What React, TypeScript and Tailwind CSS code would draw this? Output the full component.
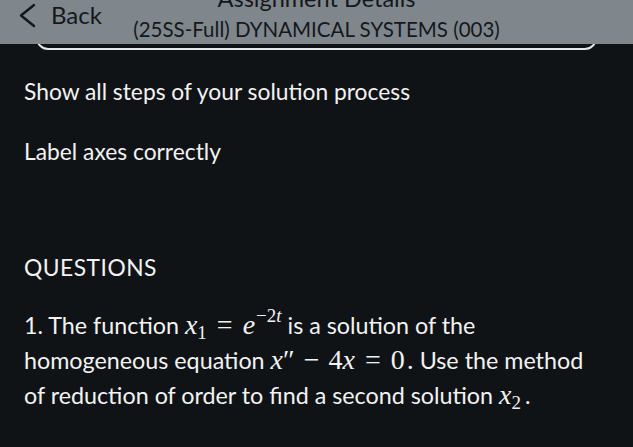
const math = { fontFamily: '"Liberation Serif", "DejaVu Serif", serif' };

function M({ children, className = "" }: { children: React.ReactNode; className?: string }) {
  return (
    <span className={`italic text-[28px] leading-[0] ${className}`} style={math}>
      {children}
    </span>
  );
}

function R({ children, className = "" }: { children: React.ReactNode; className?: string }) {
  return (
    <span className={`text-[28px] leading-[0] ${className}`} style={math}>
      {children}
    </span>
  );
}

export default function App() {
  return (
    <div
      className="w-[633px] h-[447px] overflow-hidden bg-[#101316] text-[#f2f2f2]"
      style={{ fontFamily: 'Lato, "Open Sans", sans-serif' }}
    >
      {/* 헤더 */}
      <header className="relative h-[44px] bg-[#7f878d] text-[#15181b]">
        <div className="flex items-center pl-[13px] pt-[1px]">
          <svg width="24" height="28" viewBox="0 0 24 28" fill="none">
            <path d="M21 4 L8 14.5 L21 25" stroke="#15181b" strokeWidth="2.4" strokeLinecap="round" strokeLinejoin="round" />
          </svg>
          <span className="ml-[14px] text-[24px] leading-[26px]">Back</span>
        </div>
        <div className="absolute inset-x-0 top-0 flex flex-col items-center">
          <span className="text-[23.5px] leading-[28px] -mt-[16px]">Assignment Details</span>
          <span className="text-[20.5px] leading-[22px] mt-[6px]">(25SS-Full) DYNAMICAL SYSTEMS (003)</span>
        </div>
      </header>

      {/* 카드 하단 테두리 */}
      <div className="h-[6px] overflow-hidden px-[36px]">
        <div className="h-[24px] -mt-[18px] rounded-[14px] border-2 border-[#e6e6e6]" />
      </div>

      <div className="px-[24px]">
        <p className="mt-[27px] text-[22.8px] leading-[28px]">Show all steps of your solution process</p>
        <p className="mt-[32px] text-[22.8px] leading-[28px]">Label axes correctly</p>
        <p className="mt-[88px] text-[22.8px] leading-[28px] tracking-[0.5px]">QUESTIONS</p>

        <div className="mt-[27px] text-[23.3px] leading-[35px]">
          <p>
            1. The function <M>x</M>
            <R>
              <sub className="text-[19px]">1</sub>
            </R>
            <R className="mx-[10px]">=</R>
            <M>e</M>
            <sup className="text-[19px] -top-[0.62em] ml-[1px]">
              <span style={math}>−2</span>
              <span className="italic" style={math}>t</span>
            </sup>{" "}
            is a solution of the
          </p>
          <p>
            homogeneous equation <M>x</M>
            <R>″</R>
            <R className="mx-[9px]">−</R>
            <R>4</R>
            <M>x</M>
            <R className="mx-[10px]">=</R>
            <R>0</R>
            <R className="ml-[2px]">.</R> Use the method
          </p>
          <p>
            of reduction of order to find a second solution <M>x</M>
            <R>
              <sub className="text-[19px]">2</sub>
            </R>
            <span className="ml-[4px]">.</span>
          </p>
        </div>
      </div>
    </div>
  );
}
